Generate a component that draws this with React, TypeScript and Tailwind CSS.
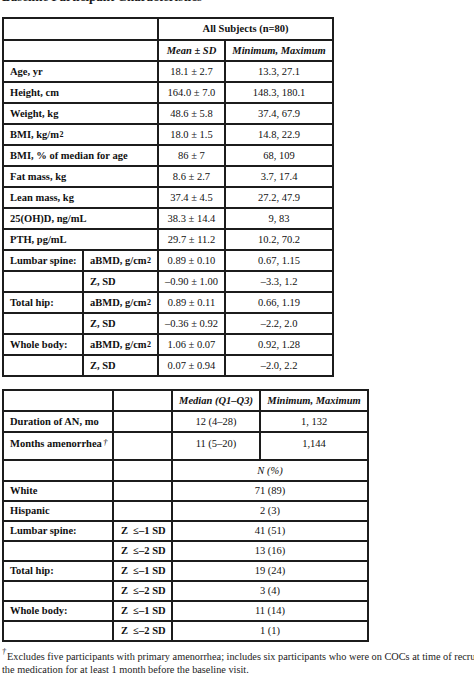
import React from "react";

const B = "border-2 border-[#1c1c1c]";
const td = `${B} px-[6px] p-0 align-middle whitespace-nowrap`;
const tdc = `${B} p-0 text-center align-middle whitespace-nowrap`;

function Sup2() {
  return <sup className="text-[8px] font-bold relative -top-[1px] ml-[0.5px]">2</sup>;
}

type R1 = { a: React.ReactNode; b?: React.ReactNode; span?: boolean; m: string; r: string };

const rows1: R1[] = [
  { a: "Age, yr", span: true, m: "18.1 ± 2.7", r: "13.3, 27.1" },
  { a: "Height, cm", span: true, m: "164.0 ± 7.0", r: "148.3, 180.1" },
  { a: "Weight, kg", span: true, m: "48.6 ± 5.8", r: "37.4, 67.9" },
  { a: <>BMI, kg/m<Sup2 /></>, span: true, m: "18.0 ± 1.5", r: "14.8, 22.9" },
  { a: "BMI, % of median for age", span: true, m: "86 ± 7", r: "68, 109" },
  { a: "Fat mass, kg", span: true, m: "8.6 ± 2.7", r: "3.7, 17.4" },
  { a: "Lean mass, kg", span: true, m: "37.4 ± 4.5", r: "27.2, 47.9" },
  { a: "25(OH)D, ng/mL", span: true, m: "38.3 ± 14.4", r: "9, 83" },
  { a: "PTH, pg/mL", span: true, m: "29.7 ± 11.2", r: "10.2, 70.2" },
  { a: "Lumbar spine:", b: <>aBMD, g/cm<Sup2 /></>, m: "0.89 ± 0.10", r: "0.67, 1.15" },
  { a: "", b: "Z, SD", m: "–0.90 ± 1.00", r: "–3.3, 1.2" },
  { a: "Total hip:", b: <>aBMD, g/cm<Sup2 /></>, m: "0.89 ± 0.11", r: "0.66, 1.19" },
  { a: "", b: "Z, SD", m: "–0.36 ± 0.92", r: "–2.2, 2.0" },
  { a: "Whole body:", b: <>aBMD, g/cm<Sup2 /></>, m: "1.06 ± 0.07", r: "0.92, 1.28" },
  { a: "", b: "Z, SD", m: "0.07 ± 0.94", r: "–2.0, 2.2" },
];

const rows2: { a: string; b: string; v: string }[] = [
  { a: "White", b: "", v: "71 (89)" },
  { a: "Hispanic", b: "", v: "2 (3)" },
  { a: "Lumbar spine:", b: "Z  ≤–1 SD", v: "41 (51)" },
  { a: "", b: "Z  ≤–2 SD", v: "13 (16)" },
  { a: "Total hip:", b: "Z  ≤–1 SD", v: "19 (24)" },
  { a: "", b: "Z  ≤–2 SD", v: "3 (4)" },
  { a: "Whole body:", b: "Z  ≤–1 SD", v: "11 (14)" },
  { a: "", b: "Z  ≤–2 SD", v: "1 (1)" },
];

export default function App() {
  return (
    <div
      className="w-[474px] h-[674px] overflow-hidden bg-white text-[#111] pl-[2px]"
      style={{ fontFamily: '"Liberation Serif", "Times New Roman", serif' }}
    >
      <div className="-mt-[11px] h-[16px] text-[13px] font-bold whitespace-nowrap leading-[16px] text-[#1a1a1a]">
        Baseline Participant Characteristics
      </div>
      <table className="mt-[12px] border-collapse table-fixed w-[330px] text-[10.5px] leading-[12px] border-[2.5px] border-[#111]">
        <colgroup>
          <col className="w-[80px]" />
          <col className="w-[75px]" />
          <col className="w-[67px]" />
          <col className="w-[108px]" />
        </colgroup>
        <tbody>
          <tr className="h-[22px]">
            <td colSpan={2} className={B}></td>
            <td colSpan={2} className={`${tdc} font-bold`}>All Subjects (n=80)</td>
          </tr>
          <tr className="h-[21px]">
            <td colSpan={2} className={td}></td>
            <td className={`${tdc} font-bold italic`}>Mean ± SD</td>
            <td className={`${tdc} font-bold italic`}>Minimum, Maximum</td>
          </tr>
          {rows1.map((r, i) => (
            <tr key={i} className="h-[21px]">
              {r.span ? (
                <td colSpan={2} className={`${td} font-bold`}>{r.a}</td>
              ) : (
                <>
                  <td className={`${td} font-bold`}>{r.a}</td>
                  <td className={`${td} font-bold`}>{r.b}</td>
                </>
              )}
              <td className={tdc}>{r.m}</td>
              <td className={tdc}>{r.r}</td>
            </tr>
          ))}
        </tbody>
      </table>

      <table className="mt-[12px] border-collapse table-fixed w-[365px] text-[10.5px] leading-[12px] border-[2.5px] border-[#111]">
        <colgroup>
          <col className="w-[110px]" />
          <col className="w-[59px]" />
          <col className="w-[88px]" />
          <col className="w-[108px]" />
        </colgroup>
        <tbody>
          <tr className="h-[21px]">
            <td className={td}></td>
            <td className={td}></td>
            <td className={`${tdc} font-bold italic`}>Median (Q1–Q3)</td>
            <td className={`${tdc} font-bold italic`}>Minimum, Maximum</td>
          </tr>
          <tr className="h-[21px]">
            <td className={`${td} font-bold`}>Duration of AN, mo</td>
            <td className={td}></td>
            <td className={tdc}>12 (4–28)</td>
            <td className={tdc}>1, 132</td>
          </tr>
          <tr className="h-[28px]">
            <td className={`${td} font-bold align-bottom pb-[4px]`}>
              Months amenorrhea<sup className="italic font-normal text-[9px] relative -top-[2px] ml-[1px]">†</sup>
            </td>
            <td className={td}></td>
            <td className={`${B} p-0 text-center align-top pt-[5px]`}>11 (5–20)</td>
            <td className={`${B} p-0 text-center align-top pt-[5px]`}>1,144</td>
          </tr>
          <tr className="h-[21px]">
            <td className={td}></td>
            <td className={td}></td>
            <td colSpan={2} className={`${tdc} italic`}>N (%)</td>
          </tr>
          {rows2.map((r, i) => (
            <tr key={i} className="h-[20px]">
              <td className={`${td} font-bold`}>{r.a}</td>
              <td className={`${td} font-bold whitespace-pre pl-[7px]`}>{r.b}</td>
              <td colSpan={2} className={tdc}>{r.v}</td>
            </tr>
          ))}
        </tbody>
      </table>

      <div className="mt-[8px] text-[10.3px] leading-[13px] whitespace-nowrap text-[#222]">
        <div>
          <sup className="italic text-[8px] relative -top-[6px] mr-[1px]">†</sup>Excludes five participants with primary amenorrhea; includes six participants who were on COCs at time of recruitment but had discontinued
        </div>
        <div>the medication for at least 1 month before the baseline visit.</div>
      </div>
    </div>
  );
}
